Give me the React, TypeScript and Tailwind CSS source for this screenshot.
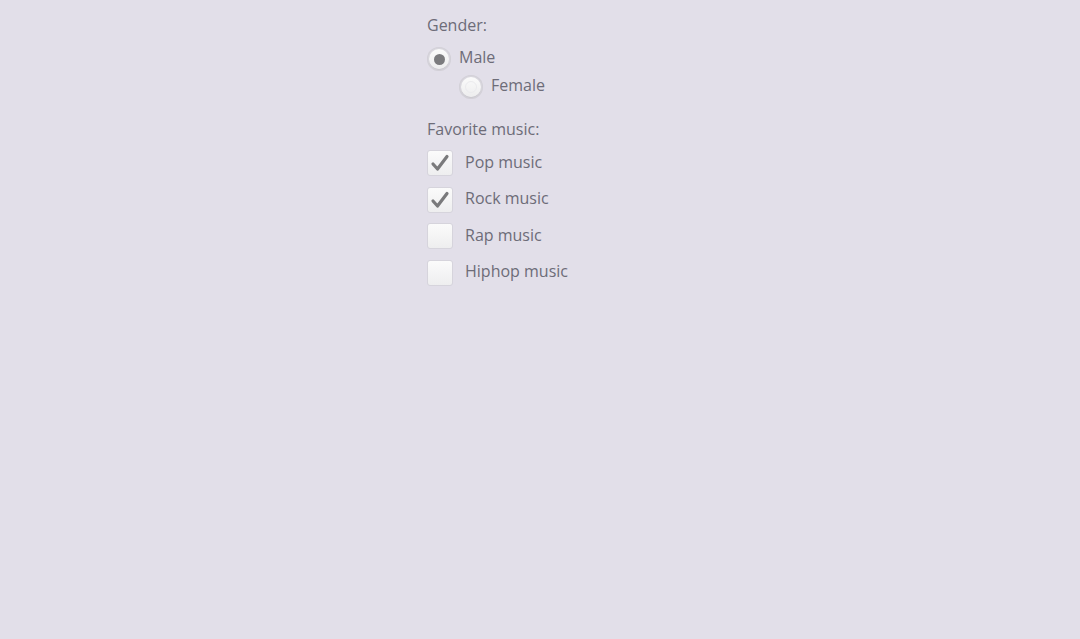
import React from "react";

const Radio: React.FC<{ checked?: boolean }> = ({ checked }) => (
  <span className="flex h-[24px] w-[24px] items-center justify-center rounded-full bg-[#d9d7de] shadow-[inset_0_0_0_1px_#d3d1d8]">
    <span className="flex h-[20px] w-[20px] items-center justify-center rounded-full bg-gradient-to-b from-[#fbfbfb] to-[#ededee] shadow-[0_1px_1px_rgba(0,0,0,0.08)]">
      {checked ? (
        <span className="h-[11px] w-[11px] rounded-full bg-[#7b7b7e]" />
      ) : (
        <span className="h-[12px] w-[12px] rounded-full border border-[#ebebee]" />
      )}
    </span>
  </span>
);

const Check: React.FC<{ checked?: boolean }> = ({ checked }) => (
  <span className="flex h-[26px] w-[26px] items-center justify-center rounded-[3px] border border-[#d6d4dc] bg-gradient-to-b from-[#fbfbfb] to-[#eeeeef]">
    {checked && (
      <svg width="20" height="18" viewBox="0 0 20 18">
        <path
          d="M3 10 L7.5 15 L17 2.5"
          fill="none"
          stroke="#7a7a7c"
          strokeWidth="3.2"
          strokeLinecap="round"
          strokeLinejoin="round"
        />
      </svg>
    )}
  </span>
);

const music = [
  { label: "Pop music", checked: true },
  { label: "Rock music", checked: true },
  { label: "Rap music", checked: false },
  { label: "Hiphop music", checked: false },
];

export default function App() {
  return (
    <div
      className="min-h-[639px] w-full bg-[#e2dfe9] text-[16px] text-[#6d6c78]"
      style={{ fontFamily: '"Open Sans", "Liberation Sans", sans-serif' }}
    >
      <div className="ml-[427px] flex flex-col pt-[13px]">
        <p className="leading-[24px]">Gender:</p>
        <div className="mt-[10px] flex items-center gap-[8px]">
          <Radio checked />
          <span className="leading-[24px] -mt-[4px]">Male</span>
        </div>
        <div className="ml-[32px] mt-[4px] flex items-center gap-[8px]">
          <Radio />
          <span className="leading-[24px] -mt-[4px]">Female</span>
        </div>
        <p className="mt-[18px] leading-[24px]">Favorite music:</p>
        <div className="mt-[9px] flex flex-col gap-[10.5px]">
          {music.map((m) => (
            <div key={m.label} className="flex items-center gap-[12px]">
              <Check checked={m.checked} />
              <span className="leading-[24px] -mt-[3px]">{m.label}</span>
            </div>
          ))}
        </div>
      </div>
    </div>
  );
}
